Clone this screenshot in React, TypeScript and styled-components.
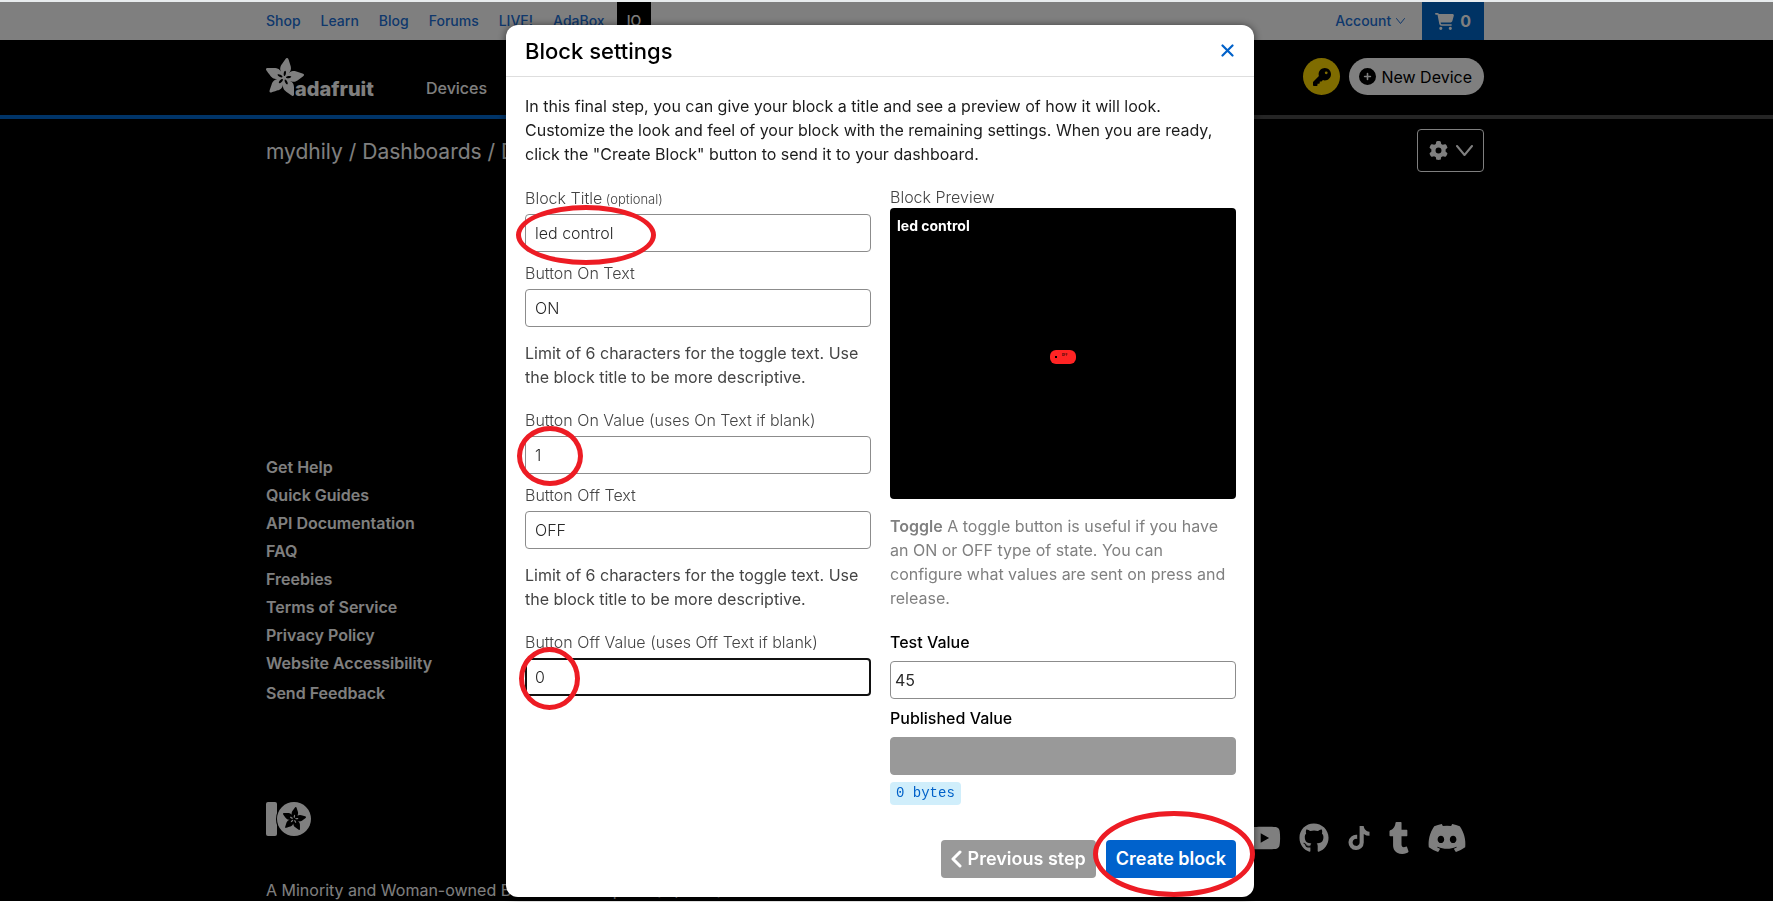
import React from 'react';
import styled, { createGlobalStyle, css } from 'styled-components';
import {
  FaCartShopping,
  FaCirclePlus,
  FaDiscord,
  FaGear,
  FaGithub,
  FaKey,
  FaTiktok,
  FaTumblr,
  FaYoutube,
} from 'react-icons/fa6';
import { SiAdafruit } from 'react-icons/si';

const GlobalStyle = createGlobalStyle`
  *, *::before, *::after { box-sizing: border-box; }
  body {
    margin: 0;
    background: #fff;
    color: #000;
    font-family: Inter, "Liberation Sans", sans-serif;
    font-size: 16px;
    line-height: 24px;
  }
  a { color: inherit; text-decoration: none; }
  button, input { font: inherit; margin: 0; }
  h1, h2, p, ul { margin: 0; padding: 0; }
  svg { display: block; flex: none; }
`;

/* ---------- page ---------- */

const Page = styled.div`
  min-height: 100vh;
  display: flex;
  flex-direction: column;
  background: #000;
  color: #fff;
  border-top: 2px solid #e8ecee;
  border-bottom: 1px solid #fff;
`;

const Container = styled.div`
  width: 100%;
  max-width: 1241px;
  margin: 0 auto;
  padding-right: 23px;
`;

const TopBar = styled.nav`
  background: #fff;
  color: #2070d8;
  font-size: 14px;
  font-weight: 500;
`;

const TopBarRow = styled(Container)`
  display: flex;
  height: 38px;
  align-items: stretch;
  justify-content: space-between;
`;

const SiteLinks = styled.div`
  display: flex;
  align-items: center;
  gap: 20px;
`;

const CurrentSite = styled.a`
  align-self: stretch;
  display: flex;
  align-items: center;
  margin-left: -8px;
  padding: 0 10px;
  background: #000;
  color: #fff;
`;

const AccountArea = styled.div`
  display: flex;
  align-items: stretch;
  gap: 17px;
`;

const AccountButton = styled.button`
  display: flex;
  align-items: center;
  gap: 5px;
  padding: 0;
  border: 0;
  background: none;
  color: inherit;
`;

const CartLink = styled.a`
  display: flex;
  align-items: center;
  gap: 6px;
  padding: 0 13px;
  background: #0066c8;
  color: #fff;
  font-size: 16px;
  font-weight: 700;
`;

const Header = styled.header`
  background: #000;
`;

const HeaderRow = styled(Container)`
  display: flex;
  align-items: flex-start;
  height: 75px;
  padding-top: 18px;
`;

const MainNav = styled.nav`
  flex: 1;
  padding: 18px 0 0 51px;
  font-weight: 500;
`;

const HeaderActions = styled.div`
  display: flex;
  gap: 9px;
`;

const KeyButton = styled.button`
  display: flex;
  align-items: center;
  justify-content: center;
  width: 37px;
  height: 37px;
  padding: 0;
  border: 0;
  border-radius: 50%;
  background: #ffd800;
  color: #000;
`;

const NewDeviceButton = styled.button`
  display: flex;
  align-items: center;
  gap: 5px;
  height: 37px;
  padding: 0 12px 0 10px;
  border: 0;
  border-radius: 19px;
  background: #fff;
  color: #000;
`;

const AccentLine = styled.div`
  height: 4px;
  background: linear-gradient(to right, #0068d0 50%, #4a4a4a 50%);
`;

const PageHeading = styled(Container)`
  display: flex;
  justify-content: space-between;
  align-items: center;
  padding-top: 10px;
`;

const Breadcrumb = styled.h1`
  padding-top: 3px;
  font-size: 21px;
  font-weight: 400;
  line-height: 28px;
`;

const SettingsButton = styled.button`
  display: flex;
  align-items: center;
  gap: 8px;
  height: 43px;
  padding: 0 10px 0 11px;
  border: 1px solid #fff;
  border-radius: 4px;
  background: #000;
  color: #fff;
`;

const Dashboard = styled.main`
  flex: 1;
`;

const Footer = styled.footer`
  font-weight: 400;
`;

const FooterLinks = styled.ul`
  list-style: none;
  font-weight: 600;
  line-height: 28px;

  li:last-child { padding-top: 2px; }
`;

const FooterBrands = styled.div`
  display: flex;
  justify-content: space-between;
  align-items: flex-start;
  padding: 95px 17px 25px 0;
`;

const SocialLinks = styled.div`
  display: flex;
  align-items: center;
  gap: 18px;
  height: 33px;
  margin-top: 19px;
`;

const SocialLink = styled.a<{ $width: number }>`
  display: flex;
  justify-content: center;
  width: ${(p) => p.$width}px;
`;

const Ownership = styled.p`
  line-height: 22px;
`;

/* ---------- dialog ---------- */

const Backdrop = styled.div`
  position: fixed;
  inset: 2px 0 1px;
  display: flex;
  justify-content: center;
  align-items: flex-start;
  padding: 23px 13px 0 0;
  background: rgba(0, 0, 0, 0.5);
`;

const Dialog = styled.div`
  width: 748px;
  max-width: 100%;
  border-radius: 12px;
  background: #fff;
  box-shadow: 0 1px 8px rgba(0, 0, 0, 0.6);
`;

const DialogHeader = styled.div`
  display: flex;
  justify-content: space-between;
  align-items: center;
  height: 52px;
  padding: 0 18px 0 19px;
  border-bottom: 1px solid #dedede;
`;

const DialogTitle = styled.h2`
  font-size: 22px;
  font-weight: 500;
  line-height: 28px;
`;

const CloseButton = styled.button`
  padding: 2px;
  border: 0;
  background: none;
  color: #0061c9;
`;

const DialogBody = styled.div`
  padding: 17px 18px 0 19px;
`;

const Intro = styled.p`
  color: #1c1c1c;
`;

const Columns = styled.div`
  display: grid;
  grid-template-columns: 1fr 1fr;
  gap: 19px;
  padding-top: 20px;
`;

const Column = styled.div`
  min-width: 0;
`;

const Field = styled.div`
  display: flex;
  flex-direction: column;
  gap: 4px;
  margin-bottom: 9px;
`;

const FieldLabel = styled.label`
  color: #444;
  font-weight: 300;
`;

const Optional = styled.small`
  font-size: 13px;
  line-height: 16px;
`;

const Control = styled.div`
  position: relative;
`;

const inputBox = css`
  display: block;
  width: 100%;
  height: 38px;
  border: 1px solid #8c8c8c;
  border-radius: 4px;
  background: #fff;
  color: #2a2a2a;
  outline: 0;
`;

const TextInput = styled.input<{ $active?: boolean }>`
  ${inputBox}
  padding: 0 9px;
  font-weight: 300;
  ${(p) =>
    p.$active &&
    css`
      padding: 0 8px;
      border: 2px solid #111;
    `}
`;

const HelpText = styled.p`
  margin: 14px 0 19px;
  color: #444;
`;

const PreviewLabel = styled.div`
  color: #444;
  font-weight: 300;
  line-height: 22px;
`;

const Preview = styled.div`
  display: flex;
  flex-direction: column;
  height: 291px;
  padding: 7px;
  border-radius: 4px;
  background: #000;
  color: #fff;
`;

const PreviewTitle = styled.div`
  font-size: 14px;
  font-weight: 700;
  line-height: 22px;
`;

const PreviewStage = styled.div`
  flex: 1;
  display: flex;
  justify-content: center;
  align-items: center;
  padding-bottom: 15px;
`;

const ToggleButton = styled.button`
  padding: 0;
  border: 0;
  border-radius: 6px;
  background: #ff2424;
  color: #000;
`;

const Description = styled.p`
  padding: 15px 0 20px;
  color: #808080;

  b { font-weight: 600; }
`;

const ValueField = styled.div`
  display: flex;
  flex-direction: column;
  gap: 7px;
  margin-bottom: 7px;
`;

const ValueLabel = styled.label`
  font-weight: 500;
`;

const ValueInput = styled.input<{ $filled?: boolean }>`
  ${inputBox}
  padding: 0 4px;
  ${(p) =>
    p.$filled &&
    css`
      border-color: #999;
      background: #999;
    `}
`;

const ByteCount = styled.code`
  display: block;
  width: fit-content;
  padding: 0 6px;
  border-radius: 4px;
  background: #d0eefb;
  color: #0061c9;
  font-family: "Liberation Mono", monospace;
  font-size: 14px;
  line-height: 23px;
`;

const DialogFooter = styled.div`
  display: flex;
  justify-content: flex-end;
  gap: 10px;
  padding: 35px 18px 19px;
`;

const StepButton = styled.button<{ $primary?: boolean }>`
  display: flex;
  align-items: center;
  gap: 6px;
  height: 38px;
  padding: 0 10px;
  border: 0;
  border-radius: 4px;
  background: ${(p) => (p.$primary ? '#0062cc' : '#999')};
  color: #fff;
  font-size: 18px;
  font-weight: 600;
`;

/* Hand-drawn highlight laid over a control. */
const Ring = styled.span<{ $x: number; $y: number; $w: number; $h: number }>`
  position: absolute;
  left: ${(p) => p.$x}px;
  top: ${(p) => p.$y}px;
  width: ${(p) => p.$w}px;
  height: ${(p) => p.$h}px;
  border: 5px solid #ed1c24;
  border-radius: 50%;
  pointer-events: none;
`;

/* ---------- drawings ---------- */

const AdafruitLogo = () => (
  <svg width="109" height="46" viewBox="0 0 109 46" fill="#fff" role="img" aria-label="adafruit">
    <SiAdafruit x="0" y="0" size={38} />
    <text x="29" y="38" fontFamily="Inter, sans-serif" fontWeight="800" fontSize="20">
      adafruit
    </text>
  </svg>
);

const IoLogo = () => (
  <svg width="46" height="34" viewBox="0 0 46 34" role="img" aria-label="Adafruit IO">
    <rect width="11" height="34" rx="2" fill="#fff" />
    <circle cx="28" cy="17" r="18" fill="#000" />
    <circle cx="28" cy="17" r="17" fill="#fff" />
    <SiAdafruit x="17" y="5" size={23} color="#000" />
  </svg>
);

const Caret = ({ width, height, stroke }: { width: number; height: number; stroke: number }) => (
  <svg width={width} height={height} viewBox={`0 0 ${width} ${height}`} fill="none" stroke="currentColor" strokeWidth={stroke} strokeLinecap="round" strokeLinejoin="round">
    <path d={`M${stroke / 2} ${stroke / 2} L${width / 2} ${height - stroke / 2} L${width - stroke / 2} ${stroke / 2}`} />
  </svg>
);

const BackIcon = () => (
  <svg width="11" height="18" viewBox="0 0 11 18" fill="none" stroke="currentColor" strokeWidth="3" strokeLinecap="round" strokeLinejoin="round">
    <path d="M9 2 L2 9 L9 16" />
  </svg>
);

const CloseIcon = () => (
  <svg width="13" height="13" viewBox="0 0 13 13" stroke="currentColor" strokeWidth="2.2" strokeLinecap="round">
    <path d="M1.5 1.5 L11.5 11.5 M11.5 1.5 L1.5 11.5" />
  </svg>
);

const ToggleFace = () => (
  <svg width="26" height="14" viewBox="0 0 26 14">
    <rect x="5" y="6" width="2" height="2" />
    <text x="12" y="6" fontSize="3" fontWeight="500" fontFamily="Inter, sans-serif">
      OFF
    </text>
  </svg>
);

/* ---------- content ---------- */

const siteLinks = ['Shop', 'Learn', 'Blog', 'Forums', 'LIVE!', 'AdaBox'];

const footerLinks = [
  'Get Help',
  'Quick Guides',
  'API Documentation',
  'FAQ',
  'Freebies',
  'Terms of Service',
  'Privacy Policy',
  'Website Accessibility',
  'Send Feedback',
];

const socialLinks = [
  { name: 'YouTube', Icon: FaYoutube, size: 34, width: 34 },
  { name: 'GitHub', Icon: FaGithub, size: 30, width: 30 },
  { name: 'TikTok', Icon: FaTiktok, size: 24, width: 24 },
  { name: 'Tumblr', Icon: FaTumblr, size: 32, width: 20 },
  { name: 'Discord', Icon: FaDiscord, size: 40, width: 40 },
];

type RingBox = { x: number; y: number; w: number; h: number };

type FormFieldProps = {
  id: string;
  label: string;
  value: string;
  optional?: boolean;
  active?: boolean;
  ring?: RingBox;
};

const FormField = ({ id, label, value, optional, active, ring }: FormFieldProps) => (
  <Field>
    <FieldLabel htmlFor={id}>
      {label}
      {optional && <Optional> (optional)</Optional>}
    </FieldLabel>
    <Control>
      <TextInput id={id} type="text" defaultValue={value} $active={active} />
      {ring && <Ring $x={ring.x} $y={ring.y} $w={ring.w} $h={ring.h} />}
    </Control>
  </Field>
);

const limitText =
  'Limit of 6 characters for the toggle text. Use the block title to be more descriptive.';

export default function App() {
  return (
    <>
      <GlobalStyle />
      <Page>
        <TopBar>
          <TopBarRow>
            <SiteLinks>
              {siteLinks.map((name) => (
                <a href="#" key={name}>{name}</a>
              ))}
              <CurrentSite href="#">IO</CurrentSite>
            </SiteLinks>
            <AccountArea>
              <AccountButton type="button">
                Account
                <Caret width={9} height={6} stroke={1} />
              </AccountButton>
              <CartLink href="#">
                <FaCartShopping size={19} />0
              </CartLink>
            </AccountArea>
          </TopBarRow>
        </TopBar>
        <Header>
          <HeaderRow>
            <a href="#"><AdafruitLogo /></a>
            <MainNav><a href="#">Devices</a></MainNav>
            <HeaderActions>
              <KeyButton type="button" aria-label="Show key"><FaKey size={18} /></KeyButton>
              <NewDeviceButton type="button">
                <FaCirclePlus size={17} />
                New Device
              </NewDeviceButton>
            </HeaderActions>
          </HeaderRow>
          <AccentLine />
        </Header>
        <PageHeading>
          <Breadcrumb>
            <a href="#">mydhily</a> / <a href="#">Dashboards</a> / D
          </Breadcrumb>
          <SettingsButton type="button" aria-label="Dashboard settings">
            <FaGear size={19} />
            <Caret width={17} height={11} stroke={2} />
          </SettingsButton>
        </PageHeading>
        <Dashboard />
        <Footer>
          <Container>
            <FooterLinks>
              {footerLinks.map((name) => (
                <li key={name}><a href="#">{name}</a></li>
              ))}
            </FooterLinks>
            <FooterBrands>
              <IoLogo />
              <SocialLinks>
                {socialLinks.map(({ name, Icon, size, width }) => (
                  <SocialLink href="#" key={name} aria-label={name} $width={width}>
                    <Icon size={size} />
                  </SocialLink>
                ))}
              </SocialLinks>
            </FooterBrands>
            <Ownership>A Minority and Woman-owned Business Enterprise (M/WBE)</Ownership>
          </Container>
        </Footer>
      </Page>

      <Backdrop>
        <Dialog role="dialog" aria-labelledby="dialog-title">
          <DialogHeader>
            <DialogTitle id="dialog-title">Block settings</DialogTitle>
            <CloseButton type="button" aria-label="Close"><CloseIcon /></CloseButton>
          </DialogHeader>
          <DialogBody>
            <Intro>
              In this final step, you can give your block a title and see a preview of how it will
              look. Customize the look and feel of your block with the remaining settings. When you
              are ready, click the "Create Block" button to send it to your dashboard.
            </Intro>
            <Columns>
              <Column>
                <FormField id="title" label="Block Title" value="led control" optional ring={{ x: -9, y: -9, w: 140, h: 60 }} />
                <FormField id="on-text" label="Button On Text" value="ON" />
                <HelpText>{limitText}</HelpText>
                <FormField id="on-value" label="Button On Value (uses On Text if blank)" value="1" ring={{ x: -8, y: -10, w: 66, h: 60 }} />
                <FormField id="off-text" label="Button Off Text" value="OFF" />
                <HelpText>{limitText}</HelpText>
                <FormField id="off-value" label="Button Off Value (uses Off Text if blank)" value="0" active ring={{ x: -6, y: -11, w: 61, h: 63 }} />
              </Column>
              <Column>
                <PreviewLabel>Block Preview</PreviewLabel>
                <Preview>
                  <PreviewTitle>led control</PreviewTitle>
                  <PreviewStage>
                    <ToggleButton type="button"><ToggleFace /></ToggleButton>
                  </PreviewStage>
                </Preview>
                <Description>
                  <b>Toggle</b> A toggle button is useful if you have an ON or OFF type of state. You
                  can configure what values are sent on press and release.
                </Description>
                <ValueField>
                  <ValueLabel htmlFor="test-value">Test Value</ValueLabel>
                  <ValueInput id="test-value" type="text" defaultValue="45" />
                </ValueField>
                <ValueField>
                  <ValueLabel htmlFor="published-value">Published Value</ValueLabel>
                  <ValueInput id="published-value" type="text" readOnly $filled />
                </ValueField>
                <ByteCount>0 bytes</ByteCount>
              </Column>
            </Columns>
          </DialogBody>
          <DialogFooter>
            <StepButton type="button">
              <BackIcon />
              Previous step
            </StepButton>
            <Control>
              <StepButton type="button" $primary>Create block</StepButton>
              <Ring $x={-13} $y={-29} $w={162} $h={86} />
            </Control>
          </DialogFooter>
        </Dialog>
      </Backdrop>
    </>
  );
}
